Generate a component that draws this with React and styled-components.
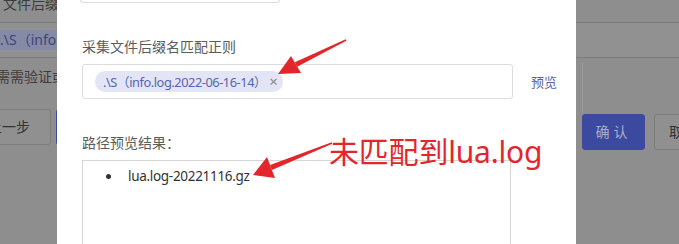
import React from "react";
import styled, { createGlobalStyle } from "styled-components";

const Global = createGlobalStyle`
  html, body { margin: 0; padding: 0; background: #8e8e8e; }
  body { font-family: "Noto Sans", "Noto Sans CJK SC", sans-serif; }
  * { box-sizing: border-box; }
`;

const Page = styled.div`
  position: relative;
  width: 679px;
  height: 244px;
  overflow: hidden;
  display: flex;
  background: #8e8e8e;
`;

const Backdrop = styled.div`
  width: ${(p) => p.$w}px;
  flex: none;
  overflow: hidden;
  display: flex;
  flex-direction: column;
  color: #3c3c3c;
  font-size: 14px;
  line-height: 20px;
  white-space: nowrap;
`;

const DimText = styled.div`
  margin-top: ${(p) => p.$mt || 0}px;
  margin-left: ${(p) => p.$ml || 0}px;
  height: 20px;
  color: ${(p) => p.$c || "#3c3c3c"};
`;

const DimField = styled.div`
  margin-top: ${(p) => p.$mt || 0}px;
  height: 36px;
  border-top: 1px solid #7c7c7c;
  border-bottom: 1px solid #7c7c7c;
  background: #919191;
  display: flex;
  align-items: center;
`;

const DimTag = styled.div`
  height: 20px;
  padding: 0 4px 0 ${(p) => p.$pl || 0}px;
  background: #858aa6;
  color: #3f4678;
  display: flex;
  align-items: center;
`;

const DimBoxEdge = styled.div`
  margin-top: 5px;
  margin-left: 6px;
  height: 50px;
  border-left: 1px solid #999;
`;

const DimButtons = styled.div`
  margin-top: ${(p) => p.$mt || 0}px;
  margin-left: ${(p) => p.$ml || 0}px;
  display: flex;
  gap: ${(p) => p.$gap || 0}px;
  height: 36px;
`;

const DimButton = styled.div`
  width: ${(p) => p.$w}px;
  flex: none;
  height: 36px;
  border-radius: 3px;
  display: flex;
  align-items: center;
  justify-content: ${(p) => p.$jc || "center"};
  padding-left: ${(p) => p.$pl || 0}px;
  padding-right: ${(p) => p.$pr || 0}px;
  letter-spacing: ${(p) => p.$ls || 0}px;
  background: ${(p) => (p.$primary ? "#3b4a9e" : "#909090")};
  color: ${(p) => (p.$primary ? "#a9adcf" : "#333")};
  border: 1px solid ${(p) => (p.$primary ? "#3b4a9e" : "#7d7d7d")};
`;

const Modal = styled.div`
  width: 519px;
  flex: none;
  background: #fff;
  padding-left: 25px;
  display: flex;
  flex-direction: column;
  color: #555;
  font-size: 14px;
  line-height: 20px;
`;

const PrevInput = styled.div`
  margin-left: -2px;
  width: 200px;
  height: 4px;
  border: 1px solid #dcdcdc;
  border-top: none;
  border-radius: 0 0 4px 4px;
`;

const Label = styled.div`
  margin-top: ${(p) => p.$mt}px;
  color: #5c5c5c;
  font-size: 14px;
  line-height: 20px;
  height: 20px;
`;

const FieldRow = styled.div`
  margin-top: 7px;
  display: flex;
  align-items: center;
`;

const Input = styled.div`
  width: 431px;
  height: 35px;
  border: 1px solid #dcdcdc;
  border-radius: 3px;
  display: flex;
  align-items: center;
  padding-left: 12px;
`;

const Tag = styled.div`
  height: 21px;
  border-radius: 10px;
  background: #e3e5f7;
  color: #5665ad;
  font-size: 12.8px;
  letter-spacing: -0.45px;
  display: flex;
  align-items: center;
  padding: 0 5px 0 8px;
  gap: 3px;
  white-space: nowrap;
`;

const Close = styled.span`
  color: #8a8a8a;
  font-size: 15px;
  line-height: 1;
`;

const LinkText = styled.span`
  margin-left: 18px;
  color: #5665ad;
  font-size: 13px;
`;

const PreviewBox = styled.div`
  margin-top: 7px;
  width: 429px;
  height: 120px;
  border: 1px solid #d6d6d6;
  border-bottom: none;
  padding-top: 5px;
`;

const List = styled.ul`
  margin: 0;
  padding: 0;
  list-style: none;
`;

const Item = styled.li`
  position: relative;
  padding-left: 45px;
  color: #333;
  font-size: 13.5px;
  letter-spacing: -0.3px;
  line-height: 20px;
  &::before {
    content: "";
    position: absolute;
    left: 23px;
    top: 8px;
    width: 5px;
    height: 5px;
    border-radius: 50%;
    background: #333;
  }
`;

const Annotation = styled.div`
  position: absolute;
  left: ${(p) => p.$x}px;
  top: ${(p) => p.$y}px;
  color: #e2262b;
  font-size: 30px;
  line-height: 36px;
  white-space: nowrap;
  letter-spacing: -0.2px;
`;

const ArrowLayer = styled.svg`
  position: absolute;
  left: 0;
  top: 0;
  pointer-events: none;
`;

function Arrow({ tail, tip, w1, w2 }) {
  const bx = (w1[0] + w2[0]) / 2;
  const by = (w1[1] + w2[1]) / 2;
  const dx = bx - tail[0];
  const dy = by - tail[1];
  const len = Math.hypot(dx, dy);
  const nx = -dy / len;
  const ny = dx / len;
  const hw = 2.6;
  const tw = 0.7;
  return (
    <g fill="#e2262b">
      <polygon points={`${tip[0]},${tip[1]} ${w1[0]},${w1[1]} ${w2[0]},${w2[1]}`} />
      <polygon
        points={`${tail[0] + nx * tw},${tail[1] + ny * tw} ${bx + nx * hw},${by + ny * hw} ${bx - nx * hw},${by - ny * hw} ${tail[0] - nx * tw},${tail[1] - ny * tw}`}
      />
    </g>
  );
}

export default function App() {
  return (
    <>
      <Global />
      <Page>
        <Backdrop $w={57}>
          <DimText $mt={-6} $ml={3}>文件后缀名</DimText>
          <DimField $mt={8}>
            <DimTag>.\S（info.log</DimTag>
          </DimField>
          <DimText $mt={9} $ml={-4}>需需验证或次</DimText>
          <DimButtons $mt={22} $gap={5} $ml={-22}>
            <DimButton $w={73} $jc="center" $pr={11}>上一步</DimButton>
            <DimButton $w={40} $primary />
          </DimButtons>
        </Backdrop>

        <Modal>
          <PrevInput />
          <Label $mt={34}>采集文件后缀名匹配正则</Label>
          <FieldRow>
            <Input>
              <Tag>
                .\S（info.log.2022-06-16-14）<Close>×</Close>
              </Tag>
            </Input>
            <LinkText>预览</LinkText>
          </FieldRow>
          <Label $mt={34}>路径预览结果：</Label>
          <PreviewBox>
            <List>
              <Item>lua.log-20221116.gz</Item>
            </List>
          </PreviewBox>
        </Modal>

        <Backdrop $w={103}>
          <DimField $mt={22} />
          <DimBoxEdge />
          <DimButtons $mt={1} $gap={9} $ml={6}>
            <DimButton $w={63} $primary $ls={4}>确认</DimButton>
            <DimButton $w={60} $jc="flex-start" $pl={14}>取消</DimButton>
          </DimButtons>
        </Backdrop>

        <Annotation $x={329} $y={134}>未匹配到lua.log</Annotation>
        <ArrowLayer width="679" height="244" viewBox="0 0 679 244">
          <Arrow tail={[346, 40]} tip={[278, 74]} w1={[291, 56]} w2={[301, 73]} />
          <Arrow tail={[332, 143]} tip={[253, 175]} w1={[267, 157]} w2={[275, 178]} />
        </ArrowLayer>
      </Page>
    </>
  );
}
